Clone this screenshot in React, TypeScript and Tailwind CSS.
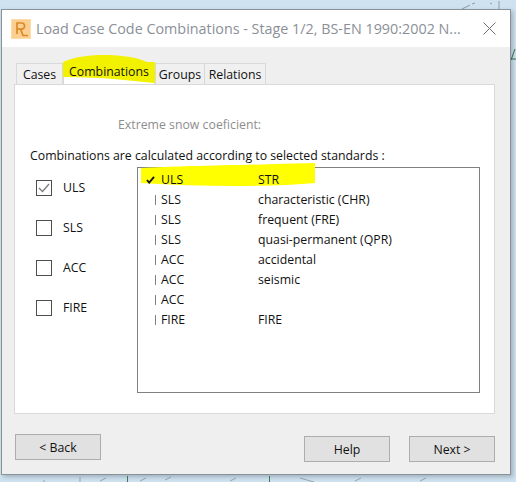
import React from 'react';

const rows = [
  { code: 'ULS', name: 'STR', checked: true },
  { code: 'SLS', name: 'characteristic (CHR)' },
  { code: 'SLS', name: 'frequent (FRE)' },
  { code: 'SLS', name: 'quasi-permanent (QPR)' },
  { code: 'ACC', name: 'accidental' },
  { code: 'ACC', name: 'seismic' },
  { code: 'ACC', name: '' },
  { code: 'FIRE', name: 'FIRE' },
];

const limitStates = [
  { label: 'ULS', checked: true },
  { label: 'SLS' },
  { label: 'ACC' },
  { label: 'FIRE' },
];

function Logo() {
  return (
    <div className="w-5 h-5 bg-[#fddcab] flex items-center justify-center">
      <svg width="20" height="20" viewBox="0 0 20 20">
        <rect x="1" y="1" width="18" height="18" fill="#fccf90" />
        <path d="M6 15V4h4.500a3 3 0 0 1 0 6.200H6M9.500 10l2.500 6.500h5" fill="none" stroke="#d98a2a" strokeWidth="1.7" />
      </svg>
    </div>
  );
}

function LimitCheck({ label, checked }: { label: string; checked?: boolean }) {
  return (
    <div className="flex items-center h-4 gap-[11px]">
      <div className="w-4 h-4 border border-[#4d4d4d] bg-white flex items-center justify-center">
        {checked && (
          <svg width="12" height="10" viewBox="0 0 12 10">
            <path d="M1 5l3.500 3.500L11 1" fill="none" stroke="#7a7a7a" strokeWidth="1.3" />
          </svg>
        )}
      </div>
      <span className="text-[12.3px] leading-4 text-[#111]">{label}</span>
    </div>
  );
}

function ListRow({ code, name, checked }: { code: string; name: string; checked?: boolean }) {
  return (
    <div className="flex items-center h-5 relative">
      <div className="w-[18px] flex justify-end items-center">
        {checked ? (
          <svg width="9" height="8" viewBox="0 0 10 9" className="mr-px">
            <path d="M1 4.500l2.500 3L9 1" fill="none" stroke="#111" strokeWidth="2" />
          </svg>
        ) : (
          <div className="w-px h-2.5 bg-[#808080]" />
        )}
      </div>
      <span className="w-[102px] pl-[5px] text-[12.3px] text-[#111]">{code}</span>
      <span className="text-[12.3px] text-[#111]">{name}</span>
    </div>
  );
}

function Button({ label, className }: { label: string; className: string }) {
  return (
    <button className={`w-[86px] h-[26px] pt-[2px] bg-[#e1e1e1] border border-[#adadad] text-[12.3px] text-[#111] ${className}`}>
      {label}
    </button>
  );
}

function Tab({ label, className }: { label: string; className: string }) {
  return (
    <div className={`h-[21px] pt-[2px] bg-[#f0f0f0] border border-b-0 border-[#d9d9d9] flex items-center justify-center text-[12.3px] text-[#111] ${className}`}>
      {label}
    </div>
  );
}

export default function App() {
  return (
    <div
      className="w-[516px] h-[482px] bg-[#cfe2f0] pt-[9px] pl-[1px] overflow-hidden relative"
      style={{ fontFamily: '"Open Sans", "Noto Sans", sans-serif' }}
    >
      {/* desktop drawing showing around the window */}
      <svg className="absolute left-0 top-0" width="516" height="482" viewBox="0 0 516 482">
        <path d="M462 9l8-4M472 4l3-1M490 3l2 1M499 1v8" stroke="#8f9aa2" strokeWidth="1" fill="none" />
        <path d="M511 60l4-11M511 59h5" stroke="#2f6b45" strokeWidth="1" fill="none" />
        <path d="M127.500 476v6M269.500 476v6" stroke="#3f7a58" strokeWidth="1" />
        <path d="M44 480v2M80 477v5M100 481l6-3M140 481l6-3M165 480l6-3M230 481l6-3M300 478l14 4M355 481l6-3M420 481l6-3" stroke="#9aa5ad" strokeWidth="1" fill="none" />
      </svg>

      <div className="relative w-[510px] h-[466px] border border-[#8a9299] bg-[#efefef] flex flex-col shadow-[2px_2px_4px_rgba(80,90,100,0.35)]">
        {/* title bar */}
        <div className="h-[37px] bg-white flex items-center pl-[9px] pr-[14px] shrink-0">
          <Logo />
          <span className="ml-[5px] text-[14.35px] text-[#8b9097] whitespace-nowrap">
            Load Case Code Combinations - Stage 1/2, BS-EN 1990:2002 N...
          </span>
          <svg width="13" height="13" viewBox="0 0 13 13" className="ml-auto">
            <path d="M.5.5l12 12M12.500.5l-12 12" stroke="#6f6f6f" strokeWidth="1" />
          </svg>
        </div>

        {/* tabs */}
        <div className="flex items-end h-[37px] pl-[14px] shrink-0">
          <Tab label="Cases" className="w-[47px]" />
          <div className="h-[22px] w-[92px] relative bg-white border-x border-[#d9d9d9] flex items-center justify-center text-[12.3px] text-[#111]">
            <svg className="absolute -left-px -top-[8px]" width="92" height="30" viewBox="0 0 92 30">
              <path d="M0 23V8C12 3 24 1 40 1c20 0 32 2 44 7h8v21C70 27 40 23 0 23z" fill="#f2f200" />
            </svg>
            <span className="relative pb-[2px]">Combinations</span>
          </div>
          <Tab label="Groups" className="w-[50px]" />
          <Tab label="Relations" className="w-[62px] -ml-px" />
        </div>

        {/* tab panel */}
        <div className="ml-[12px] w-[481px] h-[330px] bg-white border border-[#d9d9d9] pl-[15px] pt-[32px] shrink-0">
          <div className="pl-[88px] text-[12.3px] leading-4 text-[#8e8e8e]">Extreme snow coeficient:</div>
          <div className="mt-[15px] text-[12.3px] leading-4 text-[#111] whitespace-nowrap">
            Combinations are calculated according to selected standards :
          </div>
          <div className="flex mt-[3px]">
            <div className="w-[107px] pl-[6px] pt-[13px] flex flex-col gap-6">
              {limitStates.map((s) => (
                <LimitCheck key={s.label} label={s.label} checked={s.checked} />
              ))}
            </div>
            <div className="w-[343px] h-[226px] border border-[#808080] bg-white relative pt-[2px]">
              <svg className="absolute left-[3px] -top-[5px]" width="175" height="25" viewBox="0 0 175 25">
                <path d="M0 5C40 3 110 2 174 0v20c-44 4-114 4-174 0z" fill="#ffff00" />
              </svg>
              {rows.map((r, i) => (
                <ListRow key={i} code={r.code} name={r.name} checked={r.checked} />
              ))}
            </div>
          </div>
        </div>

        {/* footer */}
        <div className="flex items-start ml-[13px] mr-[15px] pt-[20px]">
          <Button label="< Back" className="" />
          <Button label="Help" className="ml-auto mt-[2px]" />
          <Button label="Next >" className="ml-[19px] mt-[2px]" />
        </div>
      </div>
    </div>
  );
}
